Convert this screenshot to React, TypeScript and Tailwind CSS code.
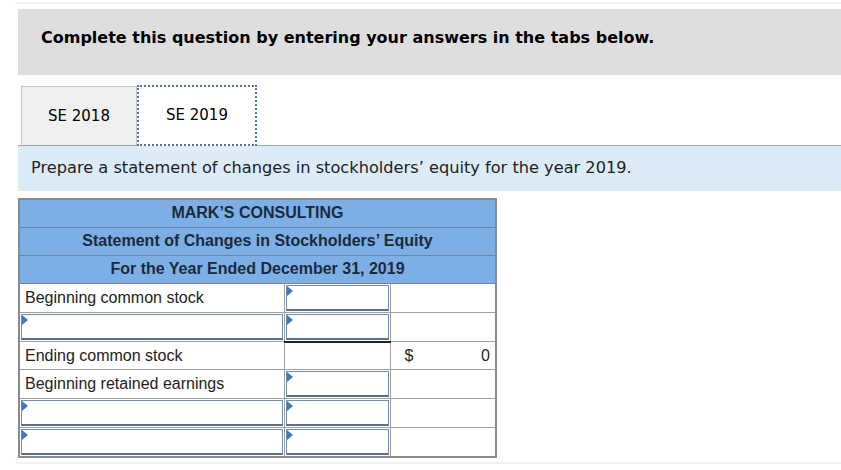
import React from 'react';

const verdana = { fontFamily: '"DejaVu Sans", Verdana, sans-serif' };
const arial = { fontFamily: '"Liberation Sans", Arial, sans-serif' };

function Marker() {
  return (
    <span className="absolute left-0 top-0 w-0 h-0 border-t-[5px] border-b-[5px] border-l-[6px] border-t-transparent border-b-transparent border-l-[#3d78c2]" />
  );
}

function InputCell() {
  return (
    <td className="border border-[#a0a0a0] p-0 h-[28px]">
      <div className="relative h-[26px] m-[1px] border border-[#6f8db5] border-b-2 border-b-[#5a6f8f] bg-white">
        <Marker />
      </div>
    </td>
  );
}

function TextCell({ children }: { children?: React.ReactNode }) {
  return (
    <td className="border border-[#a0a0a0] h-[28px] px-[5px] text-[16px] text-[#222] leading-none">
      {children}
    </td>
  );
}

export default function App() {
  return (
    <div className="w-[841px] h-[470px] bg-white overflow-hidden relative">
      <div className="ml-[15px] mt-[2px] h-[2px] bg-[#f2f2f2]" />
      <div className="pl-[18px] pt-[5px]">
        {/* instructions */}
        <div className="h-[66px] bg-[#dedede] pl-[23px] pt-[17px]">
          <p className="text-[16px] font-bold text-black" style={verdana}>
            Complete this question by entering your answers in the tabs below.
          </p>
        </div>

        {/* tabs */}
        <div className="flex mt-[10px] pl-[3px] items-end" style={verdana}>
          <div className="w-[116px] h-[59px] bg-[#f0f0f0] border border-[#c6c6c6] border-b-0 flex items-center justify-center text-[15px] text-black">
            SE 2018
          </div>
          <div className="w-[120px] h-[61px] -mb-[1px] bg-white border-2 border-dotted border-[#4f73a6] flex items-center justify-center text-[15px] text-black relative z-10">
            SE 2019
          </div>
        </div>

        {/* prompt */}
        <div className="border-t border-[#a5a5a5] bg-[#dcebf8] h-[46px] pl-[13px] flex items-center">
          <p className="text-[16.2px] text-[#222]" style={verdana}>
            Prepare a statement of changes in stockholders’ equity for the year 2019.
          </p>
        </div>

        {/* statement */}
        <table
          className="mt-[7px] border-collapse border-2 border-[#8a8a8a] w-[477px] table-fixed"
          style={arial}
        >
          <colgroup>
            <col className="w-[265px]" />
            <col className="w-[106px]" />
            <col className="w-[106px]" />
          </colgroup>
          <tbody>
            {['MARK’S CONSULTING', 'Statement of Changes in Stockholders’ Equity', 'For the Year Ended December 31, 2019'].map((t) => (
              <tr key={t}>
                <td
                  colSpan={3}
                  className="h-[28px] bg-[#7cafe6] border border-[#6b86a8] text-center font-bold text-[16px] text-[#1c2a3c] leading-none"
                >
                  {t}
                </td>
              </tr>
            ))}
            <tr>
              <TextCell>Beginning common stock</TextCell>
              <InputCell />
              <TextCell />
            </tr>
            <tr>
              <InputCell />
              <InputCell />
              <TextCell />
            </tr>
            <tr>
              <TextCell>Ending common stock</TextCell>
              <td className="border border-[#a0a0a0] border-t-2 border-t-[#222] h-[28px]" />
              <td className="border border-[#a0a0a0] h-[28px] px-[5px] text-[16px] text-[#222] leading-none">
                <div className="flex justify-between pl-[9px]">
                  <span>$</span>
                  <span>0</span>
                </div>
              </td>
            </tr>
            <tr>
              <TextCell>Beginning retained earnings</TextCell>
              <InputCell />
              <TextCell />
            </tr>
            <tr>
              <InputCell />
              <InputCell />
              <TextCell />
            </tr>
            <tr>
              <InputCell />
              <InputCell />
              <TextCell />
            </tr>
          </tbody>
        </table>
      </div>
      <div className="absolute left-[15px] right-0 top-[462px] h-[2px] bg-[#f2f2f2]" />
    </div>
  );
}
